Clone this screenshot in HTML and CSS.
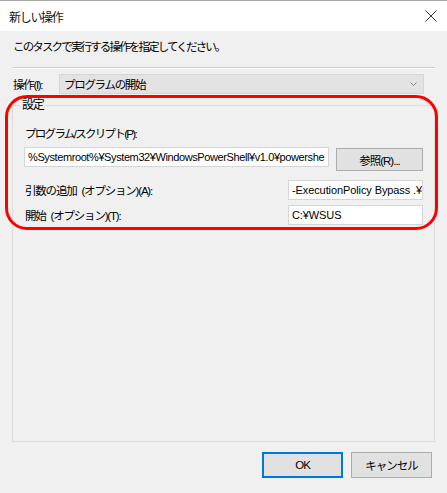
FILE: index.html
```html
<!DOCTYPE html>
<html lang="ja">
<head>
<meta charset="utf-8">
<link rel="stylesheet" href="styles.css">
</head>
<body>
<div class="window">
  <div class="titlebar">
    <span class="title">新しい操作</span>
    <svg class="close" width="12" height="12" viewBox="0 0 12 12"><path d="M0.5 0.5 L11.5 11.5 M11.5 0.5 L0.5 11.5" stroke="#333" stroke-width="1" fill="none"/></svg>
  </div>
  <div class="content">
    <p class="instr">このタスクで実行する操作を指定してください。</p>
    <div class="sep"></div>
    <div class="action-row">
      <span class="label">操作(I):</span>
      <div class="select">
        <span>プログラムの開始</span>
        <svg class="chev" width="7" height="4" viewBox="0 0 7 4"><path d="M0.5 0.5 L3.5 3.5 L6.5 0.5" stroke="#888" stroke-width="1" fill="none"/></svg>
      </div>
    </div>
    <fieldset class="group">
      <legend>設定</legend>
      <div class="lbl lbl-prog">プログラム/スクリプト(P):</div>
      <div class="prog-row">
        <div class="input input-prog">%Systemroot%¥System32¥WindowsPowerShell¥v1.0¥powershe</div>
        <div class="btn btn-browse">参照(R)...</div>
      </div>
      <div class="field-row row-args">
        <span class="lbl">引数の追加 (オプション)(A):</span>
        <div class="input input-small">-ExecutionPolicy Bypass .¥</div>
      </div>
      <div class="field-row row-start">
        <span class="lbl">開始 (オプション)(T):</span>
        <div class="input input-small">C:¥WSUS</div>
      </div>
    </fieldset>
    <div class="buttons">
      <div class="btn btn-ok">OK</div>
      <div class="btn btn-cancel">キャンセル</div>
    </div>
  </div>
  <div class="annotation"></div>
</div>
</body>
</html>
```

FILE: styles.css
```css
* { box-sizing: border-box; }
html, body { margin: 0; padding: 0; }
body {
  width: 447px;
  height: 493px;
  overflow: hidden;
  background: #f0f0f0;
  font-family: "Liberation Sans", "Noto Sans CJK JP", sans-serif;
  font-size: 11.5px;
  color: #000;
}
.window {
  position: relative;
  width: 447px;
  height: 493px;
  background: #f0f0f0;
}
.titlebar {
  height: 31px;
  background: #fff;
  border-top: 1px solid #a8a8a8;
  display: flex;
  align-items: center;
  justify-content: space-between;
  padding: 0 10px 0 9px;
}
.title {
  font-size: 12px;
  letter-spacing: -1.3px;
  color: #111;
}
.close { display: block; }
.content {
  padding: 0 12px;
}
.instr {
  margin: 0;
  padding: 8px 0 0 1px;
  line-height: 16px;
  letter-spacing: -1.85px;
}
.sep {
  margin-top: 12px;
  height: 2px;
  border-top: 1px solid #cfcfcf;
  border-bottom: 1px solid #fbfbfb;
}
.action-row {
  display: flex;
  align-items: center;
  margin-top: 5px;
  padding-left: 1px;
  padding-right: 11px;
  height: 20px;
}
.label {
  width: 46px;
  letter-spacing: -1.3px;
}
.select {
  flex: 1;
  height: 20px;
  background: #e3e3e3;
  border: 1px solid #d6d6d6;
  display: flex;
  align-items: center;
  justify-content: space-between;
  padding: 0 6px 0 4px;
  letter-spacing: -1.3px;
}
.chev { display: block; }
.group {
  margin: 4px 0 0 0;
  padding: 0 11px;
  border: 1px solid #dcdcdc;
  height: 344px;
  min-width: 0;
}
.group legend {
  margin-left: -4px;
  padding: 0 2px;
  line-height: 14px;
  font-size: 12px;
  letter-spacing: -1.3px;
}
.lbl {
  letter-spacing: -1.2px;
  word-spacing: 3px;
  padding-left: 1px;
}
.lbl-prog {
  margin-top: 14px;
  line-height: 16px;
  letter-spacing: -1.7px;
}
.prog-row {
  display: flex;
  align-items: flex-start;
  gap: 7px;
  margin-top: 5px;
}
.input {
  height: 20px;
  background: #fff;
  border: 1px solid #d6d6d6;
  line-height: 18px;
  padding-left: 3px;
  white-space: nowrap;
  overflow: hidden;
  font-size: 11px;
}
.input-prog {
  width: 305px;
  letter-spacing: -0.4px;
}
.btn {
  display: flex;
  align-items: center;
  justify-content: center;
  background: #e1e1e1;
  border: 1px solid #adadad;
  letter-spacing: -1px;
}
.btn-browse {
  width: 87px;
  height: 23px;
  margin-top: 1px;
}
.field-row {
  display: flex;
  align-items: center;
  justify-content: space-between;
  height: 20px;
}
.row-args { margin-top: 9px; }
.row-start { margin-top: 5px; }
.input-small {
  width: 135px;
  letter-spacing: -0.1px;
}
.buttons {
  display: flex;
  justify-content: flex-end;
  gap: 8px;
  margin-top: 10px;
  padding-right: 3px;
}
.btn-ok, .btn-cancel {
  width: 81px;
  height: 26px;
}
.btn-ok {
  border: 2px solid #0078d7;
}
.annotation {
  position: absolute;
  left: 5px;
  top: 95px;
  width: 433px;
  height: 135px;
  border: 3px solid #ff0000;
  border-radius: 22px;
  pointer-events: none;
}
```
